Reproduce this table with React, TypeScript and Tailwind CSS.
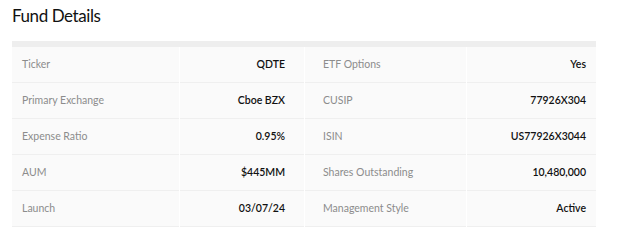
const rows = [
  { l1: "Ticker", v1: "QDTE", l2: "ETF Options", v2: "Yes" },
  { l1: "Primary Exchange", v1: "Cboe BZX", l2: "CUSIP", v2: "77926X304" },
  { l1: "Expense Ratio", v1: "0.95%", l2: "ISIN", v2: "US77926X3044" },
  { l1: "AUM", v1: "$445MM", l2: "Shares Outstanding", v2: "10,480,000" },
  { l1: "Launch", v1: "03/07/24", l2: "Management Style", v2: "Active" },
];

export default function App() {
  return (
    <div className="h-[245px] w-[640px] bg-white pl-[12px] font-['Lato','Liberation_Sans',sans-serif]">
      <h2 className="pt-[5px] text-[17px] leading-[22px] tracking-tight text-[#111]">Fund Details</h2>

      <div className="mt-[14px] w-[584px]">
        <div className="h-[6px] bg-[#eeeeee]" />
        <div className="grid grid-cols-[167px_124px_161px_129px] gap-x-px text-[10.5px]">
          {rows.map((r) => (
            <div key={r.l1} className="contents">
              <div className="flex h-[36px] items-center border-b border-[#efefef] bg-[#fafafa] pl-[10px] text-[#8c8c8c]">
                {r.l1}
              </div>
              <div className="flex h-[36px] items-center justify-end border-b border-[#efefef] bg-[#fafafa] pr-[19px] font-semibold text-[#111]">
                {r.v1}
              </div>
              <div className="flex h-[36px] items-center border-b border-[#efefef] bg-[#fafafa] pl-[18px] text-[#8c8c8c]">
                {r.l2}
              </div>
              <div className="flex h-[36px] items-center justify-end border-b border-[#efefef] bg-[#fafafa] pr-[10px] font-semibold text-[#111]">
                {r.v2}
              </div>
            </div>
          ))}
        </div>
      </div>
    </div>
  );
}
